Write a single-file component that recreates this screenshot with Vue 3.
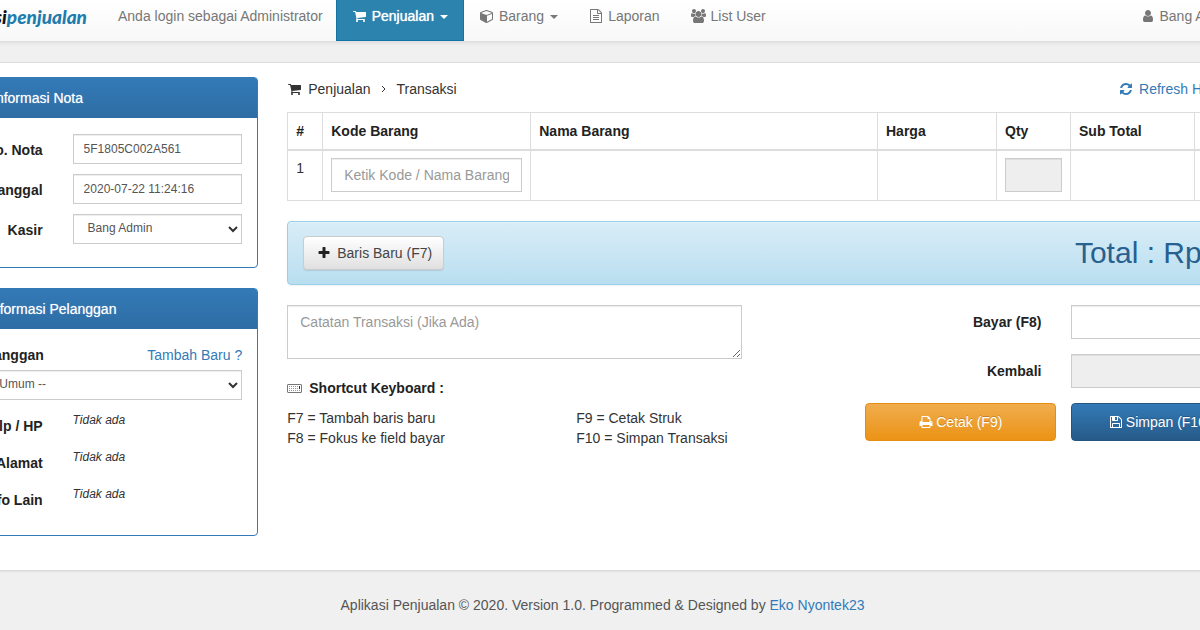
<script setup>
import { ref } from 'vue'

const icons = {
  cart: 'M640 1536q0 52-38 90t-90 38-90-38-38-90 38-90 90-38 90 38 38 90zm896 0q0 52-38 90t-90 38-90-38-38-90 38-90 90-38 90 38 38 90zm128-1088v512q0 24-16.5 42.5t-40.5 21.5l-1044 122q13 60 13 70 0 16-24 64h920q26 0 45 19t19 45-19 45-45 19h-1024q-26 0-45-19t-19-45q0-11 8-31.5t16-36 21.5-40 15.5-29.5l-177-823h-204q-26 0-45-19t-19-45 19-45 45-19h256q16 0 28.5 6.5t19.5 15.5 13 24.5 8 26 5.5 29.5 4.5 26h1201q26 0 45 19t19 45z',
  cube: 'M896 1629l640-349v-636l-640 233v752zm-64-865l698-254-698-254-698 254zm832-252v768q0 35-18 65t-49 47l-704 384q-28 16-61 16t-61-16l-704-384q-31-17-49-47t-18-65v-768q0-40 23-73t61-47l704-256q22-8 44-8t44 8l704 256q38 14 61 47t23 73z',
  file: 'M1596 380q28 28 48 76t20 88v1152q0 40-28 68t-68 28h-1344q-40 0-68-28t-28-68v-1600q0-40 28-68t68-28h896q40 0 88 20t76 48zm-444-244v376h376q-10-29-22-41l-313-313q-12-12-41-22zm384 1528v-1024h-416q-40 0-68-28t-28-68v-416h-768v1536h1280zm-1024-864q0-14 9-23t23-9h704q14 0 23 9t9 23v64q0 14-9 23t-23 9h-704q-14 0-23-9t-9-23v-64zm736 224q14 0 23 9t9 23v64q0 14-9 23t-23 9h-704q-14 0-23-9t-9-23v-64q0-14 9-23t23-9h704zm0 256q14 0 23 9t9 23v64q0 14-9 23t-23 9h-704q-14 0-23-9t-9-23v-64q0-14 9-23t23-9h704z',
  users: 'M529 896q-162 5-265 128h-134q-82 0-138-40.5t-56-118.5q0-353 124-353 6 0 43.5 21t97.5 42.5 119 21.5q67 0 133-23-5 37-5 66 0 139 81 256zm1071 637q0 120-73 189.5t-194 69.5h-874q-121 0-194-69.5t-73-189.5q0-53 3.5-103.5t14-109 26.5-108.5 43-97.5 62-81 85.5-53.5 111.5-20q10 0 43 21.5t73 48 107 48 135 21.5 135-21.5 107-48 73-48 43-21.5q61 0 111.5 20t85.5 53.5 62 81 43 97.5 26.5 108.5 14 109 3.5 103.5zm-1024-1277q0 106-75 181t-181 75-181-75-75-181 75-181 181-75 181 75 75 181zm704 384q0 159-112.5 271.5t-271.5 112.5-271.5-112.5-112.5-271.5 112.5-271.5 271.5-112.5 271.5 112.5 112.5 271.5zm576 225q0 78-56 118.5t-138 40.5h-134q-103-123-265-128 81-117 81-256 0-29-5-66 66 23 133 23 59 0 119-21.5t97.5-42.5 43.5-21q124 0 124 353zm-128-609q0 106-75 181t-181 75-181-75-75-181 75-181 181-75 181 75 75 181z',
  user: 'M1536 1399q0 109-62.5 187t-150.5 78h-854q-88 0-150.5-78t-62.5-187q0-85 8.5-160.5t31.5-152 58.5-131 94-89 134.5-34.5q131 128 313 128t313-128q76 0 134.5 34.5t94 89 58.5 131 31.5 152 8.5 160.5zm-256-887q0 159-112.5 271.5t-271.5 112.5-271.5-112.5-112.5-271.5 112.5-271.5 271.5-112.5 271.5 112.5 112.5 271.5z',
  refresh: 'M1639 1056q0 5-1 7-64 268-268 434.5t-478 166.5q-146 0-282.5-55t-243.5-157l-129 129q-19 19-45 19t-45-19-19-45v-448q0-26 19-45t45-19h448q26 0 45 19t19 45-19 45l-137 137q71 66 161 102t187 36q134 0 250-65t186-179q11-17 53-117 8-23 30-23h192q13 0 22.5 9.5t9.5 22.5zm25-800v448q0 26-19 45t-45 19h-448q-26 0-45-19t-19-45 19-45l138-138q-148-137-349-137-134 0-250 65t-186 179q-11 17-53 117-8 23-30 23h-199q-13 0-22.5-9.5t-9.5-22.5v-7q65-268 270-434.5t480-166.5q146 0 284 55.5t245 156.5l130-129q19-19 45-19t45 19 19 45z',
  plus: 'M1600 736v192q0 40-28 68t-68 28h-416v416q0 40-28 68t-68 28h-192q-40 0-68-28t-28-68v-416h-416q-40 0-68-28t-28-68v-192q0-40 28-68t68-28h416v-416q0-40 28-68t68-28h192q40 0 68 28t28 68v416h416q40 0 68 28t28 68z',
  print: 'M448 1536h896v-256h-896v256zm0-640h896v-384h-160q-40 0-68-28t-28-68v-160h-640v640zm1152 64q0-26-19-45t-45-19-45 19-19 45 19 45 45 19 45-19 19-45zm128 0v416q0 13-9.5 22.5t-22.5 9.5h-224v160q0 40-28 68t-68 28h-960q-40 0-68-28t-28-68v-160h-224q-13 0-22.5-9.5t-9.5-22.5v-416q0-79 56.5-135.5t135.5-56.5h64v-544q0-40 28-68t68-28h672q40 0 88 20t76 48l152 152q28 28 48 76t20 88v256h64q79 0 135.5 56.5t56.5 135.5z',
  save: 'M512 1536h768v-384h-768v384zm896 0h128v-896q0-14-10-38.5t-20-34.5l-281-281q-10-10-34-20t-39-10v416q0 40-28 68t-68 28h-576q-40 0-68-28t-28-68v-416h-128v1280h128v-416q0-40 28-68t68-28h832q40 0 68 28t28 68v416zm-384-928v-320q0-13-9.5-22.5t-22.5-9.5h-192q-13 0-22.5 9.5t-9.5 22.5v320q0 13 9.5 22.5t22.5 9.5h192q13 0 22.5-9.5t9.5-22.5zm640 32v928q0 40-28 68t-68 28h-1344q-40 0-68-28t-28-68v-1344q0-40 28-68t68-28h928q40 0 88 20t76 48l280 280q28 28 48 76t20 88z'
}

const menu = [
  { label: 'Penjualan', icon: 'cart', caret: true, active: true },
  { label: 'Barang', icon: 'cube', caret: true },
  { label: 'Laporan', icon: 'file' },
  { label: 'List User', icon: 'users', wide: true }
]
const customer = ['Telp / HP', 'Alamat', 'Info Lain']
const nota = ref('5F1805C002A561')
const tanggal = ref('2020-07-22 11:24:16')
</script>

<template>
  <div class="viewport">
    <div class="page">
      <header class="navbar">
        <a class="brand" href="#"><span class="brand-dark">Aplikasi</span>penjualan</a>
        <p class="login">Anda login sebagai Administrator</p>
        <nav class="menu">
          <a v-for="m in menu" :key="m.label" href="#" class="item" :class="{ active: m.active }">
            <svg class="icon" :class="{ wide: m.wide }" :viewBox="m.wide ? '-64 0 1920 1792' : '0 0 1792 1792'"><path :d="icons[m.icon]" /></svg>
            <span>{{ m.label }}</span>
            <i v-if="m.caret" class="caret"></i>
          </a>
        </nav>
        <a class="item account" href="#">
          <svg class="icon" viewBox="0 0 1792 1792"><path :d="icons.user" /></svg>
          <span>Bang Admin</span>
        </a>
      </header>

      <main class="sheet">
        <aside class="side">
          <section class="panel">
            <h2><svg class="icon" viewBox="0 0 1792 1792"><path :d="icons.file" /></svg>Informasi Nota</h2>
            <div class="panel-body nota">
              <div class="row">
                <label for="nota">No. Nota</label>
                <input id="nota" v-model="nota" class="control small" type="text">
              </div>
              <div class="row">
                <label for="tanggal">Tanggal</label>
                <input id="tanggal" v-model="tanggal" class="control small" type="text">
              </div>
              <div class="row">
                <label for="kasir">Kasir</label>
                <div class="select">
                  <select id="kasir" class="control small"><option>Bang Admin</option></select>
                  <svg class="chevron" viewBox="0 0 10 7"><path d="M1 1l4 4 4-4" /></svg>
                </div>
              </div>
            </div>
          </section>

          <section class="panel">
            <h2><svg class="icon narrow" viewBox="256 0 1280 1792"><path :d="icons.user" /></svg>Informasi Pelanggan</h2>
            <div class="panel-body pelanggan">
              <div class="line">
                <label for="pelanggan">Pelanggan</label>
                <a href="#">Tambah Baru ?</a>
              </div>
              <div class="select full">
                <select id="pelanggan" class="control small"><option>-- Umum --</option></select>
                <svg class="chevron" viewBox="0 0 10 7"><path d="M1 1l4 4 4-4" /></svg>
              </div>
              <dl>
                <div v-for="c in customer" :key="c" class="row info">
                  <dt>{{ c }}</dt>
                  <dd>Tidak ada</dd>
                </div>
              </dl>
            </div>
          </section>
        </aside>

        <div class="content">
          <div class="crumbs">
            <svg class="icon" viewBox="0 0 1792 1792"><path :d="icons.cart" /></svg>
            <span>Penjualan</span>
            <svg class="angle" viewBox="0 0 5 8"><path d="M1 1l3 3-3 3" /></svg>
            <span>Transaksi</span>
            <a class="refresh" href="#">
              <svg class="icon" viewBox="0 0 1792 1792"><path :d="icons.refresh" /></svg>
              Refresh Halaman
            </a>
          </div>

          <table>
            <colgroup>
              <col class="c-no"><col class="c-kode"><col><col class="c-harga"><col class="c-qty"><col class="c-sub"><col class="c-act">
            </colgroup>
            <thead>
              <tr><th>#</th><th>Kode Barang</th><th>Nama Barang</th><th>Harga</th><th>Qty</th><th>Sub Total</th><th></th></tr>
            </thead>
            <tbody>
              <tr>
                <td>1</td>
                <td><input class="control" type="text" placeholder="Ketik Kode / Nama Barang" aria-label="Kode Barang"></td>
                <td></td>
                <td></td>
                <td><input class="control" type="text" disabled aria-label="Qty"></td>
                <td></td>
                <td></td>
              </tr>
            </tbody>
          </table>

          <div class="total">
            <button type="button" class="btn light">
              <svg class="icon" viewBox="0 0 1792 1792"><path :d="icons.plus" /></svg>
              Baris Baru (F7)
            </button>
            <h1>Total : Rp. 0</h1>
          </div>

          <div class="bottom">
            <div class="notes">
              <textarea class="control" placeholder="Catatan Transaksi (Jika Ada)" aria-label="Catatan Transaksi"></textarea>
              <h3>
                <svg class="keyboard" viewBox="0 0 15 9">
                  <rect class="frame" x="0.5" y="0.5" width="14" height="8" rx="0.5" />
                  <path d="M2 2.5h11M2 4.5h9.500M2 6.500h1M4 6.500h7M12 6.500h1" />
                  <path class="enter" d="M12.500 2v3" />
                </svg>
                Shortcut Keyboard :
              </h3>
              <div class="keys">
                <p>F7 = Tambah baris baru<br>F8 = Fokus ke field bayar</p>
                <p>F9 = Cetak Struk<br>F10 = Simpan Transaksi</p>
              </div>
            </div>
            <form class="pay" @submit.prevent>
              <label for="bayar">Bayar (F8)</label>
              <input id="bayar" class="control" type="text">
              <label for="kembali">Kembali</label>
              <input id="kembali" class="control" type="text" disabled>
              <button type="button" class="btn orange">
                <svg class="icon" viewBox="0 0 1792 1792"><path :d="icons.print" /></svg>
                Cetak (F9)
              </button>
              <button type="submit" class="btn blue">
                <svg class="icon" viewBox="0 0 1792 1792"><path :d="icons.save" /></svg>
                Simpan (F10)
              </button>
            </form>
          </div>
        </div>
      </main>

      <footer>Aplikasi Penjualan © 2020. Version 1.0. Programmed &amp; Designed by <a href="#">Eko Nyontek23</a></footer>
    </div>
  </div>
</template>

<style>
body {
  margin: 0;
  background: #f0f0f0;
}
</style>

<style scoped>
* {
  box-sizing: border-box;
}
.viewport {
  overflow: hidden;
  min-height: 100vh;
  font: 14px/20px "Liberation Sans", Arial, sans-serif;
  color: #333;
}
.page {
  margin: 0 -63px 0 -58px;
}
a {
  color: #337ab7;
  text-decoration: none;
}
h1, h2, h3, p, dl, dd {
  margin: 0;
}
label, dt {
  font-weight: bold;
  color: #222;
}
.icon {
  width: 14px;
  height: 14px;
  fill: currentColor;
  flex: none;
}
.icon.wide {
  width: 15px;
}
.icon.narrow {
  width: 10px;
}

.navbar {
  display: flex;
  height: 41px;
  padding: 0 15px;
  background: linear-gradient(#fff, #f8f8f8);
  box-shadow: 0 1px 5px rgba(0, 0, 0, 0.12);
}
.brand {
  width: 130px;
  padding-top: 7px;
  display: flex;
  justify-content: flex-end;
  font: italic 900 19px/20px Lato, sans-serif;
  color: #1e7cae;
}
.brand-dark {
  color: #111;
}
.login {
  padding: 6px 13px 0 31px;
  color: #777;
}
.menu {
  display: flex;
}
.item {
  display: flex;
  gap: 5px;
  padding: 6px 15px 0 16px;
  color: #777;
}
.item .icon {
  margin-top: 3px;
}
.item.active {
  height: 41px;
  background: #2b83ae;
  border: solid #1273a6;
  border-width: 0 1px 1px;
  color: #fff;
  text-shadow: 0 0 1px #fff;
}
.caret {
  margin: 9px 0 0 1px;
  height: 0;
  border: 4px solid transparent;
  border-top-color: currentColor;
  border-bottom: 0;
}
.account {
  margin-left: auto;
  padding-right: 13px;
}

.sheet {
  display: flex;
  margin-top: 21px;
  padding: 14px 0 34px;
  background: #fff;
  border: solid #ddd;
  border-width: 1px 0;
  box-shadow: 0 1px 1px rgba(0, 0, 0, 0.05);
}
.side {
  width: 25%;
  padding: 0 14px 0 15px;
}
.panel {
  margin-bottom: 20px;
  border: 1px solid #337ab7;
  border-radius: 4px;
}
.panel:last-child {
  margin-bottom: 0;
}
h2 {
  display: flex;
  align-items: center;
  gap: 5px;
  padding: 10px 15px;
  background: linear-gradient(#337ab7, #2e6da4);
  border-radius: 2px 2px 0 0;
  font-size: 14px;
  line-height: 20px;
  font-weight: normal;
  color: #fff;
  text-shadow: 0 0 1px rgba(255, 255, 255, 0.6);
}
.panel-body {
  padding: 16px 15px 14px;
}
.nota {
  display: grid;
  gap: 10px;
  padding-bottom: 23px;
}
.row {
  display: grid;
  grid-template-columns: 37% 63%;
}
.row label {
  padding: 6px 30px 0 0;
  line-height: 20px;
  text-align: right;
}
.control {
  display: block;
  width: 100%;
  height: 34px;
  padding: 6px 12px;
  border: 1px solid #ccc;
  border-radius: 0;
  outline: 0;
  background: #fff;
  box-shadow: inset 0 1px 1px rgba(0, 0, 0, 0.075);
  font: 14px/20px "Liberation Sans", Arial, sans-serif;
  color: #555;
}
.control::placeholder {
  color: #999;
}
.control:disabled {
  background: #eee;
}
.control.small {
  height: 30px;
  padding: 5px 10px;
  font-size: 12px;
  line-height: 18px;
}
.select {
  position: relative;
}
select.control {
  appearance: none;
}
select.control.small {
  padding: 4px 14px 6px;
}
.chevron {
  position: absolute;
  right: 4px;
  top: 12px;
  width: 10px;
  height: 7px;
  fill: none;
  stroke: #333;
  stroke-width: 2;
}
.line {
  display: flex;
  justify-content: space-between;
}
.line label {
  width: 37%;
  padding-right: 30px;
  text-align: right;
}
.full {
  margin-top: 5px;
}
dl {
  padding-top: 10px;
}
.info {
  height: 37px;
}
.info dt {
  padding: 6px 30px 0 0;
  text-align: right;
}
.info dd {
  font-size: 12px;
  font-style: italic;
}

.content {
  width: 75%;
  padding: 0 15px;
}
.crumbs {
  display: flex;
  align-items: center;
  padding: 2px 0 13px 1px;
}
.crumbs .icon {
  margin-right: 6px;
}
.angle {
  width: 5px;
  height: 8px;
  margin: 0 11px 0 10px;
  fill: none;
  stroke: #333;
}
.refresh {
  display: flex;
  align-items: center;
  margin-left: auto;
}
table {
  width: 100%;
  border-collapse: collapse;
  table-layout: fixed;
}
th, td {
  padding: 8px;
  border: 1px solid #ddd;
  text-align: left;
  vertical-align: top;
  line-height: 20px;
}
th {
  border-bottom-width: 2px;
  color: #222;
}
td {
  padding-top: 7px;
}
.c-no { width: 35px; }
.c-kode { width: 208px; }
.c-harga { width: 119px; }
.c-qty { width: 74px; }
.c-sub { width: 124px; }
.c-act { width: 53px; }

.btn {
  display: inline-flex;
  align-items: center;
  justify-content: center;
  border: 1px solid #ccc;
  border-radius: 4px;
  font: 14px/20px "Liberation Sans", Arial, sans-serif;
  cursor: pointer;
}
.btn .icon {
  margin-right: 3px;
}
.total {
  display: flex;
  align-items: center;
  justify-content: space-between;
  margin: 20px 0;
  height: 64px;
  padding: 0 12px 0 15px;
  background: linear-gradient(#d9edf7, #b9def0);
  border: 1px solid #9acfea;
  border-radius: 4px;
  box-shadow: 0 1px 2px rgba(0, 0, 0, 0.05), inset 0 1px 0 rgba(255, 255, 255, 0.25);
}
.light {
  height: 34px;
  padding: 0 11px 0 13px;
  background: linear-gradient(#fff, #e0e0e0);
  box-shadow: 0 1px 1px rgba(0, 0, 0, 0.1);
  color: #444;
}
.light .icon {
  margin-right: 6px;
  fill: #222;
}
h1 {
  font-size: 30px;
  line-height: 34px;
  font-weight: normal;
  color: #286090;
}
.bottom {
  display: grid;
  grid-template-columns: 7fr 5fr;
  margin: 0 -15px;
}
.notes {
  padding: 0 15px;
}
.pay {
  display: grid;
  grid-template-columns: 13fr 12fr;
  gap: 15px;
  align-items: start;
  align-content: start;
  padding: 0 15px;
}
textarea.control {
  width: 83%;
  height: 54px;
  resize: vertical;
}
h3 {
  display: flex;
  align-items: center;
  gap: 7px;
  margin: 19px 0 10px;
  font-size: 14px;
  line-height: 20px;
  color: #222;
}
.keyboard {
  width: 15px;
  height: 9px;
  fill: none;
  stroke: #777;
}
.keyboard path {
  stroke: #999;
  stroke-dasharray: 1 1;
}
.keyboard .enter {
  stroke: #333;
  stroke-dasharray: none;
}
.keys {
  display: grid;
  grid-template-columns: 1fr 1fr;
  column-gap: 30px;
}
.pay label {
  padding: 7px 15px 0 0;
  text-align: right;
}
.orange, .blue {
  height: 38px;
  color: #fff;
  text-shadow: 0 -1px 0 rgba(0, 0, 0, 0.2);
}
.orange {
  background: linear-gradient(#f0ad4e, #eb9316);
  border-color: #e38d13;
}
.blue {
  background: linear-gradient(#337ab7, #265a88);
  border-color: #245580;
}
footer {
  padding: 24px 0 15px;
  text-align: center;
  color: #555;
}
</style>
